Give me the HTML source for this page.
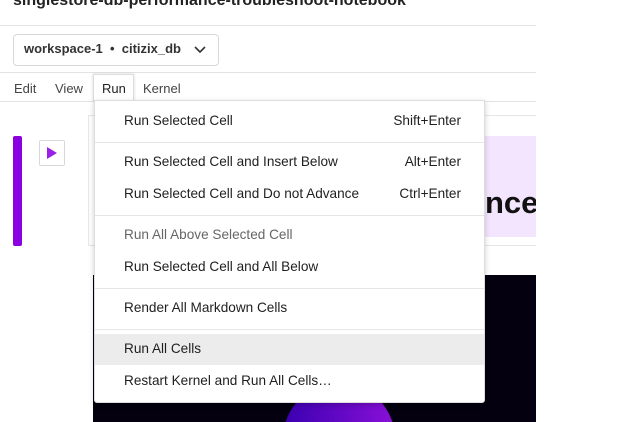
<!DOCTYPE html>
<html><head><style>
html,body{margin:0;width:640px;height:422px;overflow:hidden}
body{background:#fff;font-family:"Liberation Sans",sans-serif;position:relative;color:#222}
.a{position:absolute}
.mi{position:absolute;left:29px;font-size:13.6px;color:#1f1f1f;white-space:nowrap}
.sc{position:absolute;right:23px;font-size:13.6px;color:#1f1f1f}
.sep{position:absolute;left:0;right:0;height:1px;background:#e6e6e6}
</style></head><body>
<div class="a" style="left:13px;top:-8px;font-size:16px;font-weight:bold;color:#222;white-space:nowrap">singlestore-db-performance-troubleshoot-notebook</div>
<div class="a" style="left:0;top:25px;width:536px;height:1px;background:#e3e3e3"></div>
<div class="a" style="left:13px;top:34px;width:204px;height:30px;border:1px solid #d8d8d8;border-radius:4px"></div>
<div class="a" style="left:24px;top:41px;font-size:13px;font-weight:bold;color:#333;white-space:nowrap">workspace-1 &nbsp;•&nbsp; citizix_db</div>
<svg class="a" style="left:193px;top:44px" width="14" height="12"><path d="M2 3 L7 8 L12 3" fill="none" stroke="#333" stroke-width="1.6"/></svg>
<div class="a" style="left:0;top:72px;width:536px;height:1px;background:#e3e3e3"></div>
<div class="a" style="left:0;top:101px;width:536px;height:1px;background:#e3e3e3"></div>
<div class="a" style="left:14px;top:81px;font-size:13px;color:#444">Edit</div>
<div class="a" style="left:55px;top:81px;font-size:13px;color:#444">View</div>
<div class="a" style="left:93px;top:74px;width:39px;height:27px;background:#fff;border:1px solid #ddd;border-bottom:none;box-shadow:0 0 3px rgba(0,0,0,.15)"></div>
<div class="a" style="left:102px;top:81px;font-size:13px;color:#222">Run</div>
<div class="a" style="left:143px;top:81px;font-size:13px;color:#444">Kernel</div>
<div class="a" style="left:13px;top:136px;width:9px;height:110px;background:#8a00e0;border-radius:2px"></div>
<div class="a" style="left:39px;top:140px;width:24px;height:24px;border:1px solid #d8d8d8;border-radius:2px"></div>
<svg class="a" style="left:46px;top:146px" width="12" height="14"><path d="M1 1 L11 7 L1 13Z" fill="#9a20e8"/></svg>
<div class="a" style="left:88px;top:115px;width:447px;height:129px;border:1px solid #e6e6e6;border-right:none"></div>
<div class="a" style="left:480px;top:136px;width:56px;height:101px;background:#f3e5fd;overflow:hidden"><div style="position:absolute;left:5px;top:49px;font-size:31px;font-weight:bold;color:#111;white-space:nowrap">nce</div></div>
<div class="a" style="left:93px;top:275px;width:443px;height:147px;background:#04000f;overflow:hidden"><div style="position:absolute;left:190px;top:108px;width:112px;height:112px;border-radius:50%;background:linear-gradient(90deg,#3a00b0,#8a10d8)"></div></div>
<div class="a" style="left:94px;top:100px;width:389px;height:301px;background:#fff;border:1px solid #ddd;border-radius:0 0 3px 3px;box-shadow:0 2px 6px rgba(0,0,0,.2)">
<div class="mi" style="top:12px">Run Selected Cell</div><div class="sc" style="top:12px">Shift+Enter</div>
<div class="sep" style="top:41px"></div>
<div class="mi" style="top:53px">Run Selected Cell and Insert Below</div><div class="sc" style="top:53px">Alt+Enter</div>
<div class="mi" style="top:85px">Run Selected Cell and Do not Advance</div><div class="sc" style="top:85px">Ctrl+Enter</div>
<div class="sep" style="top:114px"></div>
<div class="mi" style="top:126px;color:#666">Run All Above Selected Cell</div>
<div class="mi" style="top:158px">Run Selected Cell and All Below</div>
<div class="sep" style="top:187px"></div>
<div class="mi" style="top:199px">Render All Markdown Cells</div>
<div class="sep" style="top:228px"></div>
<div style="position:absolute;left:0;right:0;top:233px;height:31px;background:#ececec"></div>
<div class="mi" style="top:240px">Run All Cells</div>
<div class="mi" style="top:272px">Restart Kernel and Run All Cells…</div>
</div>
</body></html>
